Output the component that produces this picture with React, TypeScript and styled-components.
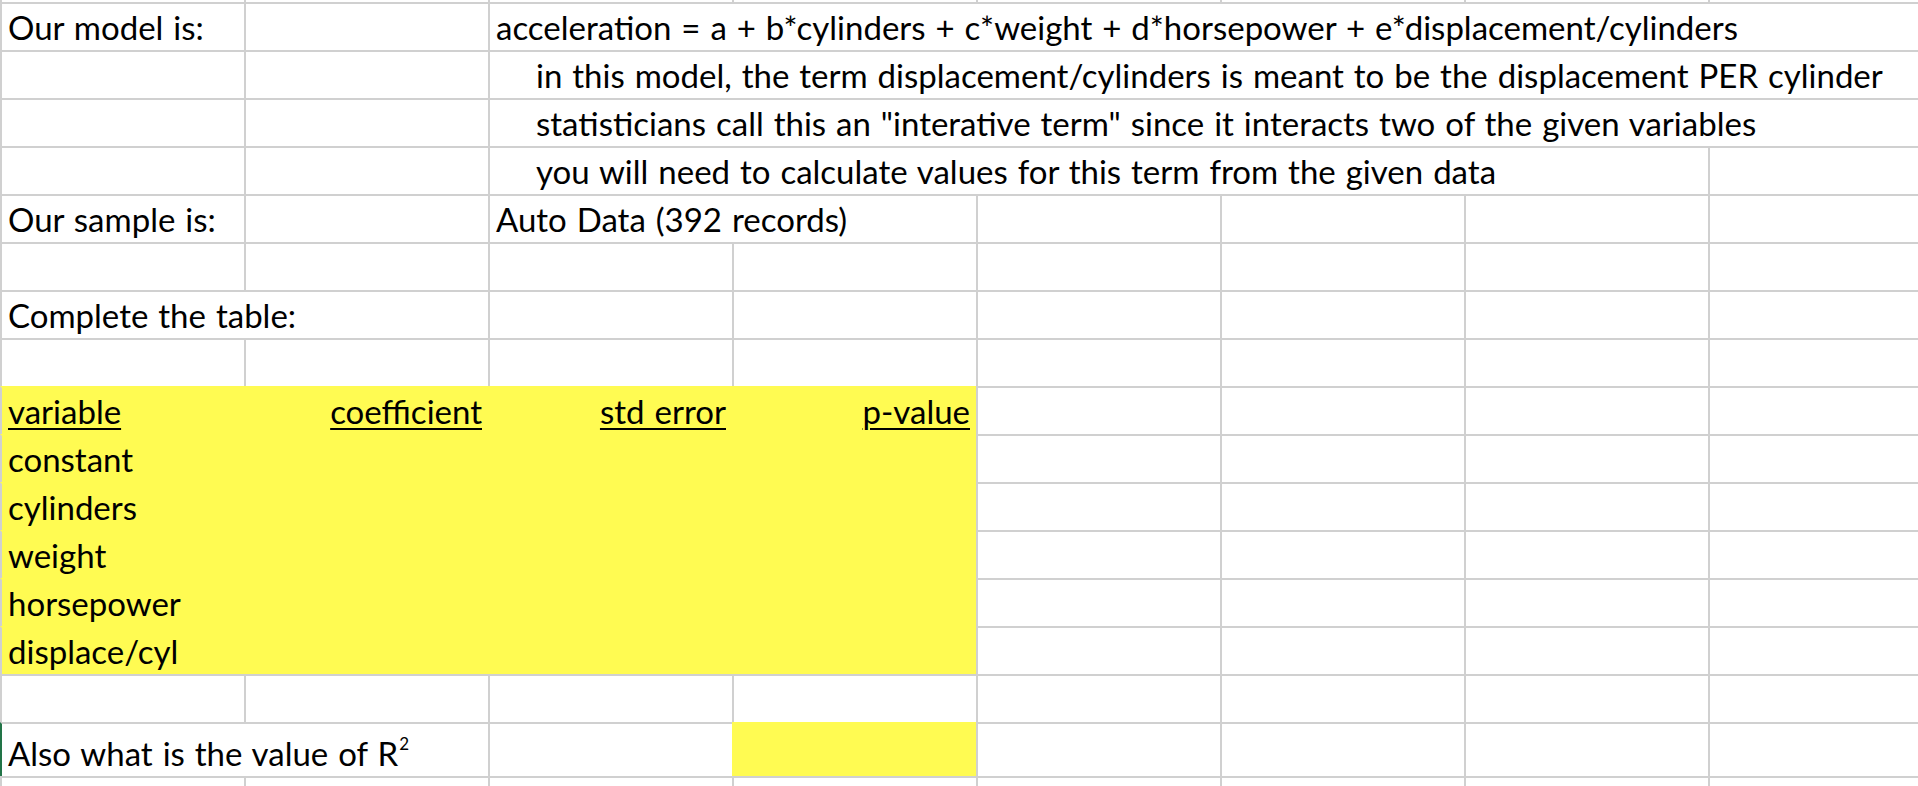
import React from "react";
import styled, { createGlobalStyle } from "styled-components";

const GRID = "#d0d0d0";
const FILL = "#fffb52";
const MARK = "#227447";

type CellDef = {
  text?: React.ReactNode;
  span?: number;
  align?: "left" | "right";
  fill?: boolean;
  underline?: boolean;
  indent?: boolean;
};

type RowDef = {
  height: number;
  cells: CellDef[];
  marked?: boolean;
  noTop?: boolean;
};

const GlobalStyle = createGlobalStyle`
  html, body {
    margin: 0;
    padding: 0;
    background: #ffffff;
    overflow: hidden;
  }
  body {
    font-family: Lato, "Open Sans", sans-serif;
    color: #000000;
  }
`;

const Sheet = styled.div`
  display: flex;
  flex-direction: column;
  width: 1918px;
  height: 786px;
  overflow: hidden;
`;

const Row = styled.div<{ $height: number }>`
  display: grid;
  grid-template-columns: repeat(7, 244px) 1fr;
  height: ${(p) => p.$height}px;
  flex: 0 0 auto;
  &:last-child {
    flex: 1 1 auto;
  }
`;

const Cell = styled.div<{
  $span: number;
  $fill: boolean;
  $first: boolean;
  $marked: boolean;
  $noTop: boolean;
  $align: "left" | "right";
}>`
  grid-column: span ${(p) => p.$span};
  box-sizing: border-box;
  display: flex;
  align-items: flex-end;
  justify-content: ${(p) => (p.$align === "right" ? "flex-end" : "flex-start")};
  padding: 0 6px 6px 6px;
  min-width: 0;
  white-space: nowrap;
  font-size: 33px;
  line-height: 1;
  word-spacing: 1.5px;
  background: ${(p) => (p.$fill ? FILL : "#ffffff")};
  border-top: ${(p) => (p.$noTop ? "0" : "2px")} solid
    ${(p) => (p.$fill ? FILL : GRID)};
  border-left: 2px solid
    ${(p) => (p.$marked && p.$first ? MARK : p.$first ? GRID : p.$fill ? FILL : GRID)};
`;

const Label = styled.span<{ $underline: boolean; $indent: boolean }>`
  padding-left: ${(p) => (p.$indent ? "40px" : "0")};
  text-decoration: ${(p) => (p.$underline ? "underline" : "none")};
  text-decoration-thickness: 2px;
  text-underline-offset: 4px;
`;

const Sup = styled.sup`
  font-size: 17px;
  vertical-align: 16px;
  line-height: 0;
  margin-left: 1px;
`;

const blanks = (n: number, fill = false): CellDef[] =>
  Array.from({ length: n }, () => ({ fill }));

const tableRow = (name: string): CellDef[] => [
  { text: name, fill: true },
  ...blanks(3, true),
  ...blanks(4),
];

const rows: RowDef[] = [
  { height: 2, noTop: true, cells: blanks(8) },
  {
    height: 48,
    cells: [
      { text: "Our model is:" },
      {},
      {
        span: 6,
        text: "acceleration = a + b*cylinders + c*weight + d*horsepower + e*displacement/cylinders",
      },
    ],
  },
  {
    height: 48,
    cells: [
      {},
      {},
      {
        span: 6,
        indent: true,
        text: "in this model, the term displacement/cylinders is meant to be the displacement PER cylinder",
      },
    ],
  },
  {
    height: 48,
    cells: [
      {},
      {},
      {
        span: 6,
        indent: true,
        text: 'statisticians call this an "interative term" since it interacts two of the given variables',
      },
    ],
  },
  {
    height: 48,
    cells: [
      {},
      {},
      {
        span: 5,
        indent: true,
        text: "you will need to calculate values for this term from the given data",
      },
      {},
    ],
  },
  {
    height: 48,
    cells: [
      { text: "Our sample is:" },
      {},
      { span: 2, text: "Auto Data (392 records)" },
      ...blanks(4),
    ],
  },
  { height: 48, cells: blanks(8) },
  {
    height: 48,
    cells: [{ span: 2, text: "Complete the table:" }, ...blanks(6)],
  },
  { height: 48, cells: blanks(8) },
  {
    height: 48,
    cells: [
      { text: "variable", fill: true, underline: true },
      { text: "coefficient", fill: true, underline: true, align: "right" },
      { text: "std error", fill: true, underline: true, align: "right" },
      { text: "p-value", fill: true, underline: true, align: "right" },
      ...blanks(4),
    ],
  },
  { height: 48, cells: tableRow("constant") },
  { height: 48, cells: tableRow("cylinders") },
  { height: 48, cells: tableRow("weight") },
  { height: 48, cells: tableRow("horsepower") },
  { height: 48, cells: tableRow("displace/cyl") },
  { height: 48, cells: blanks(8) },
  {
    height: 54,
    marked: true,
    cells: [
      {
        span: 2,
        text: (
          <>
            Also what is the value of R<Sup>2</Sup>
          </>
        ),
      },
      {},
      { fill: true },
      ...blanks(4),
    ],
  },
  { height: 10, cells: blanks(8) },
];

export default function App() {
  return (
    <>
      <GlobalStyle />
      <Sheet>
        {rows.map((row, ri) => (
          <Row key={ri} $height={row.height}>
            {row.cells.map((c, ci) => (
              <Cell
                key={ci}
                $span={c.span ?? 1}
                $fill={!!c.fill}
                $first={ci === 0}
                $marked={!!row.marked}
                $noTop={!!row.noTop}
                $align={c.align ?? "left"}
              >
                {c.text != null && (
                  <Label $underline={!!c.underline} $indent={!!c.indent}>
                    {c.text}
                  </Label>
                )}
              </Cell>
            ))}
          </Row>
        ))}
      </Sheet>
    </>
  );
}
